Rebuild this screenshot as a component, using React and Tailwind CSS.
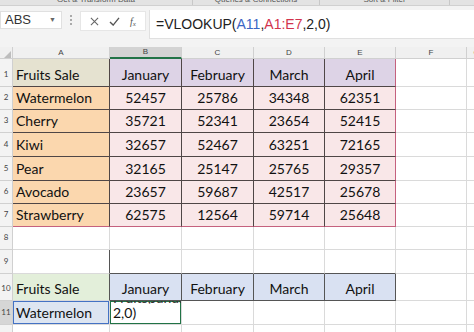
import React from "react";

// column widths in px: A..F, then the sliver of G
const cols = [
  { key: "A", w: "w-[97px]" },
  { key: "B", w: "w-[72px]" },
  { key: "C", w: "w-[72px]" },
  { key: "D", w: "w-[71px]" },
  { key: "E", w: "w-[71px]" },
  { key: "F", w: "w-[71px]" },
  { key: "G", w: "w-[20px]" },
];

const table = [
  ["Fruits Sale", "January", "February", "March", "April"],
  ["Watermelon", "52457", "25786", "34348", "62351"],
  ["Cherry", "35721", "52341", "23654", "52415"],
  ["Kiwi", "32657", "52467", "63251", "72165"],
  ["Pear", "32165", "25147", "25765", "29357"],
  ["Avocado", "23657", "59687", "42517", "25678"],
  ["Strawberry", "62575", "12564", "59714", "25648"],
];

const rowHeights = [
  "h-[28px]", "h-[23px]", "h-[23px]", "h-[24px]", "h-[24px]", "h-[23px]",
  "h-[23px]", "h-[23px]", "h-[24px]", "h-[27px]", "h-[24px]", "h-[24px]",
];

const grid = "border-r border-b border-[#dadada]";

// style for each cell of rows 1..7 (the sales table)
const tableCell = (r, c) => {
  let bg = "bg-[#f9e7e8]";
  if (r === 0 && c === 0) bg = "bg-[#e5e2d0]";
  else if (r === 0) bg = "bg-[#ddd3e6]";
  else if (c === 0) bg = "bg-[#fbd7ae]";
  const right = c === 4 ? "border-r-[#c5617e]" : "border-r-[#4f4646]";
  const bottom = r === 6 ? "border-b-[#c5617e]" : "border-b-[#4f4646]";
  return `${bg} border-r border-b ${right} ${bottom}`;
};

const Cell = ({ w, className = "", align = "center", children }) => (
  <div
    className={`${w} h-full shrink-0 box-border flex items-end pb-[2px] overflow-hidden ${
      align === "left" ? "justify-start pl-[3px]" : "justify-center"
    } ${className}`}
  >
    {children}
  </div>
);

const RowHeader = ({ n, active }) => (
  <div
    className={`w-[13px] h-full shrink-0 box-border border-r border-b border-[#d0d0d0] flex items-end justify-center pb-[3px] text-[8px] text-[#444] ${
      active ? "bg-[#d6d6d6]" : "bg-[#f3f3f3]"
    }`}
  >
    {n}
  </div>
);

export default function App() {
  return (
    <div
      className="w-[474px] h-[332px] overflow-hidden bg-[#f3f3f3] text-black"
      style={{ fontFamily: "Lato, 'Open Sans', sans-serif" }}
    >
      {/* ribbon group labels, cut at the top */}
      <div className="h-[6px] overflow-hidden bg-[#e3e3e3] border-b border-[#d0d0d0]">
        <div className="flex h-[12px] -mt-[6px] text-[8px] leading-[12px] text-[#555] font-['Liberation_Sans',sans-serif]">
          <div className="w-[193px] text-center border-r border-[#c8c8c8]">Get &amp; Transform Data</div>
          <div className="w-[127px] text-center border-r border-[#c8c8c8]">Queries &amp; Connections</div>
          <div className="w-[130px] text-center border-r border-[#c8c8c8]">Sort &amp; Filter</div>
        </div>
      </div>

      {/* formula bar */}
      <div className="h-[41px] flex items-start pt-[5px] font-['Liberation_Sans',sans-serif]">
        <div className="w-[62px] h-[18px] bg-white border border-[#e0e0e0] flex items-center justify-between pl-[4px] pr-[5px] text-[13px] text-[#333]">
          <span>ABS</span>
          <span className="text-[7px] text-[#666]">▼</span>
        </div>
        <div className="w-[18px] h-[18px] flex flex-col items-center justify-center gap-[2px]">
          <span className="w-[2px] h-[2px] bg-[#aaa]" />
          <span className="w-[2px] h-[2px] bg-[#aaa]" />
          <span className="w-[2px] h-[2px] bg-[#aaa]" />
        </div>
        <div className="w-[66px] h-[20px] bg-white border border-[#e6e6e6] flex items-center justify-around px-[4px] text-[#555]">
          <svg width="9" height="9" viewBox="0 0 10 10">
            <path d="M1 1 L9 9 M9 1 L1 9" stroke="#666" strokeWidth="1.2" />
          </svg>
          <svg width="11" height="9" viewBox="0 0 12 10">
            <path d="M1 5.5 L4.5 9 L11 1" stroke="#555" strokeWidth="1.5" fill="none" />
          </svg>
          <span className="italic text-[10px] font-['Liberation_Serif',serif] text-[#555]">
            f<sub className="text-[7px]">x</sub>
          </span>
        </div>
        <div className="ml-[3px] flex-1 h-[29px] -mt-[1px] bg-white border-l border-b border-[#e0e0e0] pl-[6px] pt-[4px] text-[14px] text-[#222]">
          =VLOOKUP(<span className="text-[#3a66c4]">A11</span>,<span className="text-[#d2334d]">A1:E7</span>,2,0)
        </div>
      </div>

      {/* column headers */}
      <div className="h-[12px] flex bg-[#f0f0f0] text-[8px] text-[#444] font-['Liberation_Sans',sans-serif]">
        <div className="w-[13px] shrink-0 border-r border-b border-[#d0d0d0] flex items-end justify-end pr-[1px]">
          <svg width="7" height="7" viewBox="0 0 7 7">
            <path d="M7 0 L7 7 L0 7 Z" fill="#bdbdbd" />
          </svg>
        </div>
        {cols.map((c) => (
          <div
            key={c.key}
            className={`${c.w} shrink-0 box-border border-r border-[#d0d0d0] flex items-center justify-center ${
              c.key === "B" ? "bg-[#d3d3d3] border-b-2 border-b-[#217346]" : "border-b"
            }`}
          >
            {c.key}
          </div>
        ))}
      </div>

      {/* rows */}
      <div className="bg-white text-[14px] leading-[18px] text-[#111]">
        {rowHeights.map((h, r) => {
          const n = r + 1;
          let cells;
          if (r < 7) {
            cells = cols.map((c, ci) =>
              ci < 5 ? (
                <Cell key={c.key} w={c.w} align={ci === 0 ? "left" : "center"} className={tableCell(r, ci)}>
                  {table[r][ci]}
                </Cell>
              ) : (
                <Cell key={c.key} w={c.w} className={grid} />
              )
            );
          } else if (n === 8 || n === 12) {
            cells = cols.map((c) => <Cell key={c.key} w={c.w} className={grid} />);
          } else if (n === 9) {
            cells = cols.map((c, ci) => (
              <Cell
                key={c.key}
                w={c.w}
                className={`border-r border-b ${ci >= 1 && ci <= 4 ? "border-b-[#555]" : "border-b-[#dadada]"} ${
                  ci === 0 ? "border-r-[#555]" : "border-r-[#dadada]"
                }`}
              />
            ));
          } else if (n === 10) {
            const labels = ["Fruits Sale", "January", "February", "March", "April"];
            cells = cols.map((c, ci) =>
              ci === 0 ? (
                <Cell key={c.key} w={c.w} align="left" className="bg-[#e3efda] border-r border-b border-r-[#555] border-b-[#dadada]">
                  {labels[0]}
                </Cell>
              ) : ci < 5 ? (
                <Cell key={c.key} w={c.w} className="bg-[#d9e1f2] border-r border-b border-[#555]">
                  {labels[ci]}
                </Cell>
              ) : (
                <Cell key={c.key} w={c.w} className={grid} />
              )
            );
          } else {
            // row 11: A11 referenced (blue), B11 being edited (green)
            cells = cols.map((c, ci) =>
              ci === 0 ? (
                <Cell key={c.key} w={c.w} align="left" className="bg-[#dde5f1] border-r border-b border-[#dadada] shadow-[inset_0_0_0_1px_#4472c4]">
                  Watermelon
                </Cell>
              ) : ci === 1 ? (
                <div
                  key={c.key}
                  className={`${c.w} h-full shrink-0 box-border border-r border-b border-[#dadada] shadow-[inset_0_0_0_1px_#217346] bg-white flex flex-col justify-between pl-[3px] pb-[2px]`}
                >
                  {/* bottom of the wrapped line above, mostly hidden */}
                  <div className="h-[4px] overflow-hidden">
                    <div className="-mt-[11px] leading-[15px] text-[#333]">Fruits,January,</div>
                  </div>
                  <div className="leading-[18px]">2,0)</div>
                </div>
              ) : (
                <Cell key={c.key} w={c.w} className={grid} />
              )
            );
          }
          return (
            <div key={r} className={`${h} flex`}>
              <RowHeader n={n === 12 ? "" : n} active={n === 11} />
              {cells}
            </div>
          );
        })}
      </div>
    </div>
  );
}
